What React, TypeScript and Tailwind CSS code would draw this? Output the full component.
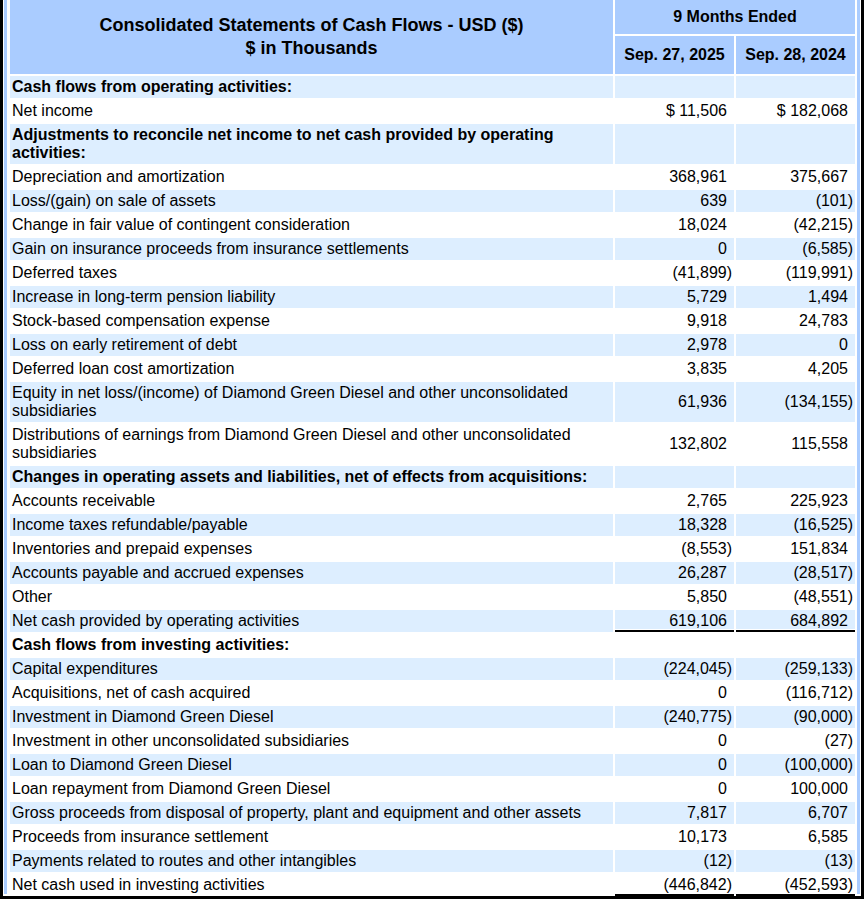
import React from "react";

type Row = {
  label: string;
  a?: string;
  b?: string;
  head?: boolean;
  total?: boolean;
};

const rows: Row[] = [
  { label: "Cash flows from operating activities:", head: true },
  { label: "Net income", a: "$ 11,506", b: "$ 182,068" },
  {
    label:
      "Adjustments to reconcile net income to net cash provided by operating activities:",
    head: true,
  },
  { label: "Depreciation and amortization", a: "368,961", b: "375,667" },
  { label: "Loss/(gain) on sale of assets", a: "639", b: "(101)" },
  { label: "Change in fair value of contingent consideration", a: "18,024", b: "(42,215)" },
  { label: "Gain on insurance proceeds from insurance settlements", a: "0", b: "(6,585)" },
  { label: "Deferred taxes", a: "(41,899)", b: "(119,991)" },
  { label: "Increase in long-term pension liability", a: "5,729", b: "1,494" },
  { label: "Stock-based compensation expense", a: "9,918", b: "24,783" },
  { label: "Loss on early retirement of debt", a: "2,978", b: "0" },
  { label: "Deferred loan cost amortization", a: "3,835", b: "4,205" },
  {
    label:
      "Equity in net loss/(income) of Diamond Green Diesel and other unconsolidated subsidiaries",
    a: "61,936",
    b: "(134,155)",
  },
  {
    label:
      "Distributions of earnings from Diamond Green Diesel and other unconsolidated subsidiaries",
    a: "132,802",
    b: "115,558",
  },
  {
    label: "Changes in operating assets and liabilities, net of effects from acquisitions:",
    head: true,
  },
  { label: "Accounts receivable", a: "2,765", b: "225,923" },
  { label: "Income taxes refundable/payable", a: "18,328", b: "(16,525)" },
  { label: "Inventories and prepaid expenses", a: "(8,553)", b: "151,834" },
  { label: "Accounts payable and accrued expenses", a: "26,287", b: "(28,517)" },
  { label: "Other", a: "5,850", b: "(48,551)" },
  { label: "Net cash provided by operating activities", a: "619,106", b: "684,892", total: true },
  { label: "Cash flows from investing activities:", head: true },
  { label: "Capital expenditures", a: "(224,045)", b: "(259,133)" },
  { label: "Acquisitions, net of cash acquired", a: "0", b: "(116,712)" },
  { label: "Investment in Diamond Green Diesel", a: "(240,775)", b: "(90,000)" },
  { label: "Investment in other unconsolidated subsidiaries", a: "0", b: "(27)" },
  { label: "Loan to Diamond Green Diesel", a: "0", b: "(100,000)" },
  { label: "Loan repayment from Diamond Green Diesel", a: "0", b: "100,000" },
  {
    label: "Gross proceeds from disposal of property, plant and equipment and other assets",
    a: "7,817",
    b: "6,707",
  },
  { label: "Proceeds from insurance settlement", a: "10,173", b: "6,585" },
  { label: "Payments related to routes and other intangibles", a: "(12)", b: "(13)" },
  { label: "Net cash used in investing activities", a: "(446,842)", b: "(452,593)", total: true },
];

function NumCell({ v, shaded, total }: { v?: string; shaded: boolean; total?: boolean }) {
  const neg = v ? v.endsWith(")") : false;
  return (
    <td
      className={
        "align-middle text-right whitespace-nowrap pl-[4px] " +
        (neg ? "pr-[2px] " : "pr-[7px] ") +
        (shaded ? "bg-[#ddeeff] " : "bg-white ") +
        (total
          ? "pt-[2px] pb-0 border-b-2 border-black shadow-[inset_0_-1px_0_white] "
          : "py-[2px] ")
      }
    >
      {v ?? ""}
    </td>
  );
}

export default function App() {
  return (
    <div className="w-[864px] h-[899px] bg-black pl-[3px] pr-[3px] pb-[3px]">
      <div className="h-full bg-white overflow-hidden pl-[1px] pr-[1px]">
        <div className="h-full border-x-[3px] border-[#aaccff] bg-white pl-[1px]">
          <table
            className="table-fixed w-[849px] border-separate border-spacing-[2px] text-black text-[16px] leading-[18px]"
            style={{ fontFamily: '"Liberation Sans", Arial, sans-serif', marginTop: "-2px" }}
          >
            <colgroup>
              <col style={{ width: "603px" }} />
              <col style={{ width: "119px" }} />
              <col style={{ width: "119px" }} />
            </colgroup>
            <thead>
              <tr>
                <th
                  rowSpan={2}
                  className="bg-[#aaccff] font-bold text-center align-middle text-[18px] leading-[23px] px-2"
                >
                  Consolidated Statements of Cash Flows - USD ($)
                  <br />$ in Thousands
                </th>
                <th colSpan={2} className="bg-[#aaccff] font-bold text-center h-[34px] align-middle">
                  9 Months Ended
                </th>
              </tr>
              <tr>
                <th className="bg-[#aaccff] font-bold text-center h-[38px] align-middle whitespace-nowrap">
                  Sep. 27, 2025
                </th>
                <th className="bg-[#aaccff] font-bold text-center h-[38px] align-middle whitespace-nowrap">
                  Sep. 28, 2024
                </th>
              </tr>
            </thead>
            <tbody>
              {rows.map((r, i) => {
                const shaded = i % 2 === 0;
                return (
                  <tr key={i}>
                    <td
                      className={
                        "align-top text-left py-[2px] pl-[2px] pr-[4px] " +
                        (shaded ? "bg-[#ddeeff] " : "bg-white ") +
                        (r.head ? "font-bold" : "")
                      }
                    >
                      {r.label}
                    </td>
                    <NumCell v={r.a} shaded={shaded} total={r.total} />
                    <NumCell v={r.b} shaded={shaded} total={r.total} />
                  </tr>
                );
              })}
            </tbody>
          </table>
        </div>
      </div>
    </div>
  );
}
